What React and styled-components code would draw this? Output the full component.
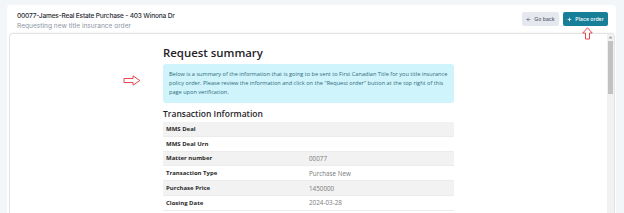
import React from "react";
import styled, { createGlobalStyle } from "styled-components";
import { ArrowLeft, Plus } from "lucide-react";

const Global = createGlobalStyle`
  html, body { margin: 0; padding: 0; background: #f3f6f9; overflow: hidden; }
  body { width: 624px; height: 213px; }
  * { box-sizing: border-box; }
`;

const Page = styled.div`
  position: relative;
  height: 213px;
  padding: 5px 8px 0 7px;
`;

const Card = styled.div`
  background: #fff;
  border-radius: 4px 4px 0 0;
  height: 208px;
  display: flex;
  flex-direction: column;
  padding: 0 1px 0 2px;
`;

const Header = styled.div`
  display: flex;
  justify-content: space-between;
  align-items: flex-start;
  padding: 7px 7px 7px 8px;
  height: 28px;
`;

const TitleBlock = styled.div`
  font-family: "Inter", "Noto Sans", sans-serif;
  margin-top: -1px;
`;

const Title = styled.div`
  font-size: 6.6px;
  line-height: 10px;
  font-weight: 500;
  letter-spacing: -0.2px;
  color: #2b2f36;
  white-space: nowrap;
`;

const Subtitle = styled.div`
  font-size: 6.6px;
  line-height: 10px;
  color: #8d95a5;
  white-space: nowrap;
`;

const Actions = styled.div`
  display: flex;
  gap: 4px;
`;

const Button = styled.button`
  display: flex;
  align-items: center;
  justify-content: center;
  gap: 3px;
  height: 14px;
  width: ${(p) => p.$w}px;
  padding: 0;
  border: none;
  border-radius: 2px;
  font-family: "Inter", "Noto Sans", sans-serif;
  font-size: 5.2px;
  font-weight: 500;
  white-space: nowrap;
  background: ${(p) => (p.$primary ? "#187f98" : "#e6e8ef")};
  color: ${(p) => (p.$primary ? "#ffffff" : "#5a6070")};
`;

const Frame = styled.div`
  flex: 1;
  display: flex;
  border: 1px solid #e4e4e4;
  border-bottom: none;
  border-radius: 4px 4px 0 0;
  box-shadow: 0 -1px 2px rgba(0, 0, 0, 0.04);
  overflow: hidden;
`;

const Content = styled.div`
  flex: 1;
  padding-top: 10px;
  display: flex;
  justify-content: center;
`;

const Column = styled.div`
  width: 291px;
  font-family: "Open Sans", "Noto Sans", sans-serif;
  color: #1f2328;
`;

const H1 = styled.h1`
  margin: 0 0 2px;
  font-size: 11.4px;
  line-height: 18px;
  font-weight: 550;
`;

const Info = styled.div`
  background: #cff4fc;
  border-radius: 3px;
  padding: 6px 6px;
  font-size: 5.6px;
  line-height: 9px;
  color: #2f6b7a;
`;

const H2 = styled.h2`
  margin: 4px 0 0;
  font-size: 8.5px;
  line-height: 14px;
  font-weight: 550;
`;

const Table = styled.div`
  margin-top: 1px;
`;

const Row = styled.div`
  display: grid;
  grid-template-columns: 146px 1fr;
  height: 14.8px;
  align-items: center;
  background: ${(p) => (p.$odd ? "#f2f2f2" : "#ffffff")};
  border-bottom: 0.5px solid #ececec;
`;

const Label = styled.div`
  padding-left: 3px;
  font-size: 6px;
  font-weight: 700;
  color: #2a2a2a;
`;

const Value = styled.div`
  font-size: 6.3px;
  color: #7a7a7a;
`;

const Scrollbar = styled.div`
  width: 7px;
  background: #f1f1f1;
  display: flex;
  flex-direction: column;
  align-items: center;
`;

const ScrollArrow = styled.div`
  height: 6px;
  display: flex;
  align-items: center;
  justify-content: center;
`;

const Thumb = styled.div`
  width: 5px;
  height: 53px;
  margin-top: 1px;
  background: #c1c1c1;
`;

const Annot = styled.svg`
  position: absolute;
`;

const rows = [
  ["MMS Deal", ""],
  ["MMS Deal Urn", ""],
  ["Matter number", "00077"],
  ["Transaction Type", "Purchase New"],
  ["Purchase Price", "1450000"],
  ["Closing Date", "2024-03-28"],
];

export default function App() {
  return (
    <>
      <Global />
      <Page>
        <Card>
          <Header>
            <TitleBlock>
              <Title>00077-James-Real Estate Purchase - 403 Winona Dr</Title>
              <Subtitle>Requesting new title insurance order</Subtitle>
            </TitleBlock>
            <Actions>
              <Button $w={37}>
                <ArrowLeft size={5} strokeWidth={3} />
                Go back
              </Button>
              <Button $primary $w={45}>
                <Plus size={5} strokeWidth={3.5} />
                Place order
              </Button>
            </Actions>
          </Header>
          <Frame>
            <Content>
              <Column>
                <H1>Request summary</H1>
                <Info>
                  Below is a summary of the information that is going to be sent to First Canadian Title for you title insurance
                  policy order. Please review the information and click on the "Request order" button at the top right of this
                  page upon verification.
                </Info>
                <H2>Transaction Information</H2>
                <Table>
                  {rows.map((r, i) => (
                    <Row key={r[0]} $odd={i % 2 === 0}>
                      <Label>{r[0]}</Label>
                      <Value>{r[1]}</Value>
                    </Row>
                  ))}
                </Table>
              </Column>
            </Content>
            <Scrollbar>
              <ScrollArrow>
                <svg width="5" height="4" viewBox="0 0 5 4">
                  <path d="M2.5 1 L4.5 3.5 L0.5 3.5 Z" fill="#a3a3a3" />
                </svg>
              </ScrollArrow>
              <Thumb />
            </Scrollbar>
          </Frame>
        </Card>
        <Annot style={{ left: 123, top: 75 }} width="18" height="11" viewBox="0 0 18 11">
          <path d="M1 3.5 H10 V0.8 L16.8 5.5 L10 10.2 V7.5 H1 Z" fill="#fff" stroke="#e8474f" strokeWidth="1" strokeLinejoin="miter" />
        </Annot>
        <Annot style={{ left: 582, top: 27 }} width="11" height="13" viewBox="0 0 11 13">
          <path d="M3.5 12 V6 H0.8 L5.5 0.8 L10.2 6 H7.5 V12 Z" fill="#fff" stroke="#e8474f" strokeWidth="1" />
        </Annot>
      </Page>
    </>
  );
}
